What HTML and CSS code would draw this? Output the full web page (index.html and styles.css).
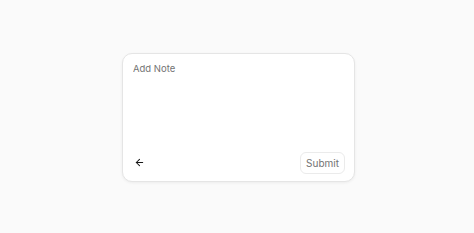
FILE: index.html
```html
<!DOCTYPE html>
<html lang="en">
<head>
    <meta charset="UTF-8">
    <meta name="viewport" content="width=device-width, initial-scale=1.0">
    <title>Add Note</title>
    <link rel="stylesheet" href="styles.css">
</head>
<body>
    <div class="note-card">
        <textarea class="note-input" placeholder="Add Note"></textarea>
        <div class="note-actions">
            <button type="button" class="back-button" aria-label="Back">
                <svg width="11" height="11" viewBox="0 0 24 24" fill="none" stroke="currentColor" stroke-width="2.2" stroke-linecap="round" stroke-linejoin="round">
                    <path d="M19 12H5"/>
                    <path d="M12 19l-7-7 7-7"/>
                </svg>
            </button>
            <button type="submit" class="submit-button">Submit</button>
        </div>
    </div>
</body>
</html>
```

FILE: styles.css
```css
body {
    font-family: 'Inter', sans-serif;
    background: #fafafa;
    display: flex;
    justify-content: center;
    align-items: center;
    height: 100vh;
    margin: 0;
    padding: 1px 0 0 3px;
    box-sizing: border-box;
}

.note-card {
    background: #fff;
    border: 1px solid #e5e5e5;
    border-radius: 10px;
    box-shadow: 0 1px 3px rgba(0, 0, 0, 0.06);
    width: 233px;
    padding: 9px 9px 7px 10px;
    box-sizing: border-box;
    display: flex;
    flex-direction: column;
    gap: 7px;
}

.note-input {
    border: none;
    outline: none;
    resize: none;
    font-family: 'Inter', sans-serif;
    font-size: 9.5px;
    color: #333;
    height: 82px;
    padding: 0;
    margin: 0;
}

.note-input::placeholder {
    color: #737373;
}

.note-actions {
    display: flex;
    justify-content: space-between;
    align-items: center;
}

.back-button {
    background: none;
    border: none;
    padding: 0 0 0 1px;
    color: #171717;
    cursor: pointer;
    display: flex;
    align-items: center;
}

.submit-button {
    background: #fff;
    border: 1px solid #ebebeb;
    border-radius: 6px;
    color: #737373;
    font-family: 'Inter', sans-serif;
    font-size: 10px;
    padding: 4px 5px;
    cursor: pointer;
}
```
